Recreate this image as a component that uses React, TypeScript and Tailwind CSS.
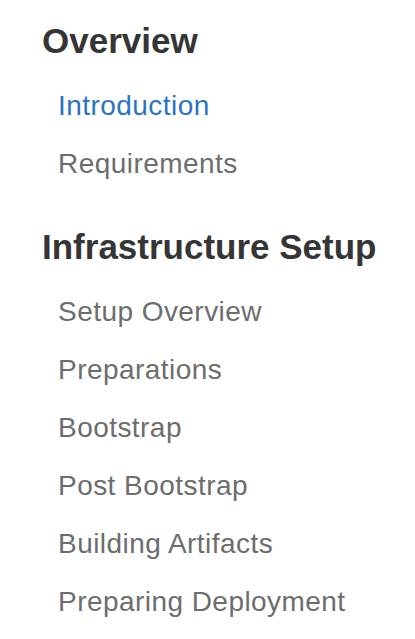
import React from 'react';

const sections = [
  {
    title: 'Overview',
    items: ['Introduction', 'Requirements'],
  },
  {
    title: 'Infrastructure Setup',
    items: [
      'Setup Overview',
      'Preparations',
      'Bootstrap',
      'Post Bootstrap',
      'Building Artifacts',
      'Preparing Deployment',
    ],
  },
];

const App = () => {
  const active = 'Introduction';

  return (
    <nav
      className="min-h-screen bg-white pl-[42px] pt-[21px]"
      style={{ fontFamily: '"Liberation Sans", Arial, sans-serif' }}
    >
      {sections.map((section, i) => (
        <div key={section.title} className={i > 0 ? 'mt-[34px]' : ''}>
          <h2 className="text-[35px] leading-[40px] font-bold text-[#353535]">{section.title}</h2>
          <ul className={i > 0 ? 'mt-[16px]' : 'mt-[16px]'}>
            {section.items.map((item) => (
              <li key={item} className="h-[58px] pl-[16px]">
                <a
                  href="#"
                  className={
                    'text-[28px] leading-[58px] tracking-[0.45px] ' +
                    (item === active ? 'text-[#2b74c4]' : 'text-[#6d6d6d]')
                  }
                >
                  {item}
                </a>
              </li>
            ))}
          </ul>
        </div>
      ))}
    </nav>
  );
};

export default App;
